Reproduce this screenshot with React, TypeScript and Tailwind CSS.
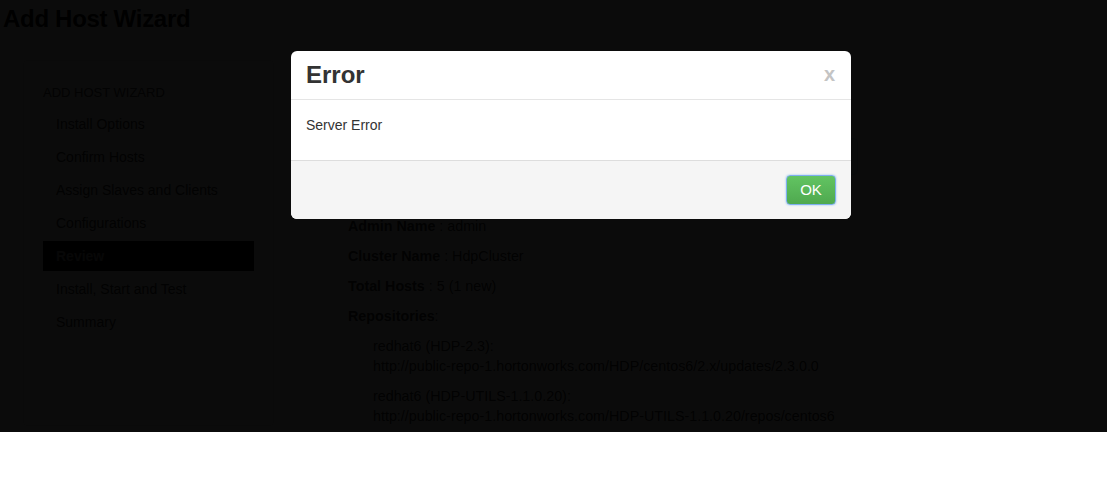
import React from "react";

const steps = [
  "Install Options",
  "Confirm Hosts",
  "Assign Slaves and Clients",
  "Configurations",
  "Review",
  "Install, Start and Test",
  "Summary",
];

const App = () => {
  return (
    <div className="font-['Liberation_Sans',Arial,sans-serif] text-[14px] text-[#333] bg-white min-h-[480px]">
      <div className="relative h-[432px] overflow-hidden">
        <h1 className="pl-[3px] pt-[4px] text-[24px] leading-[30px] font-bold text-black tracking-[-0.3px]">
          Add Host Wizard
        </h1>

        <div className="flex mt-[26px]">
          <div className="ml-[23px] w-[251px] bg-[#f5f5f5] border border-[#e3e3e3] rounded pt-[22px] px-[19px] pb-[16px]">
            <div className="text-[13px] leading-[20px] uppercase text-[#444]">
              Add Host Wizard
            </div>
            <ul className="mt-[6px] flex flex-col gap-[3px]">
              {steps.map((s) => (
                <li
                  key={s}
                  className={
                    s === "Review"
                      ? "h-[30px] pl-[13px] leading-[30px] bg-[#111] text-[#999] font-bold"
                      : "h-[30px] pl-[13px] leading-[30px] text-[#333]"
                  }
                >
                  {s}
                </li>
              ))}
            </ul>
          </div>

          <div className="ml-[74px] w-[510px]">
            {/* area hidden under the dialog */}
            <div className="h-[78px]" />
            <div className="h-[37px] bg-[#d9edf7] border border-[#bce8f1] rounded" />
            <div className="mt-[41px] flex flex-col gap-[10px] leading-[20px] text-[14.3px]">
              <p>
                <b>Admin Name</b> : admin
              </p>
              <p>
                <b>Cluster Name</b> : HdpCluster
              </p>
              <p>
                <b>Total Hosts</b> : 5 (1 new)
              </p>
              <p>
                <b>Repositories</b>:
              </p>
              <div className="pl-[25px] flex flex-col gap-[10px]">
                <div>
                  <div>redhat6 (HDP-2.3):</div>
                  <div>http://public-repo-1.hortonworks.com/HDP/centos6/2.x/updates/2.3.0.0</div>
                </div>
                <div>
                  <div>redhat6 (HDP-UTILS-1.1.0.20):</div>
                  <div>http://public-repo-1.hortonworks.com/HDP-UTILS-1.1.0.20/repos/centos6</div>
                </div>
              </div>
            </div>
          </div>
        </div>

        {/* backdrop */}
        <div className="absolute inset-0 bg-[rgba(0,0,0,0.957)]" />

        {/* modal */}
        <div className="absolute left-[291px] top-[51px] w-[560px] bg-white rounded-[6px] overflow-hidden">
          <div className="flex items-center justify-between h-[49px] px-[15px] border-b border-[#e5e5e5]">
            <h3 className="text-[24px] leading-[30px] font-bold text-[#333]">Error</h3>
            <span className="text-[20px] leading-[20px] font-bold text-[#c4c4c4] mr-[1px] -mt-[2px]">
              x
            </span>
          </div>
          <div className="px-[15px] pt-[15px] pb-[25px] h-[61px] border-b border-[#ddd]">
            <p className="leading-[20px]">Server Error</p>
          </div>
          <div className="flex justify-end bg-[#f5f5f5] h-[58px] px-[15px] pt-[14px]">
            <button className="w-[50px] h-[30px] rounded-[4px] border border-[#7eaef0] bg-gradient-to-b from-[#62c462] to-[#4fa94f] text-white text-[15px] leading-[28px] shadow-[0_0_2px_rgba(102,175,233,0.8)]">
              OK
            </button>
          </div>
        </div>
      </div>
    </div>
  );
};

export default App;
